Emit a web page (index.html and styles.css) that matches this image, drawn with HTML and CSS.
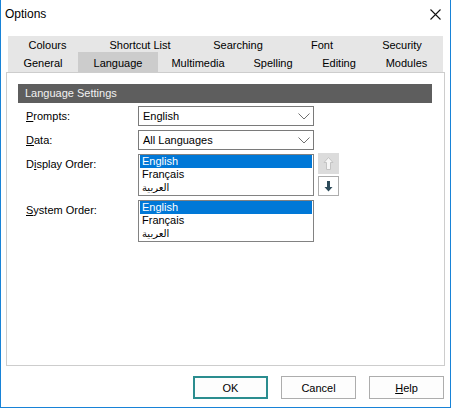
FILE: index.html
```html
<!DOCTYPE html>
<html>
<head>
<meta charset="utf-8">
<link rel="stylesheet" href="styles.css">
</head>
<body>
<div class="window">
  <div class="titlebar">
    <span class="title">Options</span>
    <svg class="close" width="11" height="11" viewBox="0 0 11 11"><path d="M0.5 0.5L10.5 10.5M10.5 0.5L0.5 10.5" stroke="#111" stroke-width="1.1" fill="none"/></svg>
  </div>
  <div class="tabs">
    <div class="tabrow row1">
      <div class="tab">Colours</div>
      <div class="tab">Shortcut List</div>
      <div class="tab">Searching</div>
      <div class="tab">Font</div>
      <div class="tab">Security</div>
    </div>
    <div class="tabrow row2">
      <div class="tab">General</div>
      <div class="tab selected">Language</div>
      <div class="tab">Multimedia</div>
      <div class="tab">Spelling</div>
      <div class="tab">Editing</div>
      <div class="tab">Modules</div>
    </div>
  </div>
  <div class="panel">
    <div class="section-header">Language Settings</div>
    <div class="form">
      <div class="label"><u>P</u>rompts:</div>
      <div class="combo"><span>English</span><svg class="chev" width="12" height="7" viewBox="0 0 12 7"><polyline points="0.5,0.5 6,6 11.5,0.5" fill="none" stroke="#707070" stroke-width="1"/></svg></div>
      <div></div>

      <div class="label"><u>D</u>ata:</div>
      <div class="combo"><span>All Languages</span><svg class="chev" width="12" height="7" viewBox="0 0 12 7"><polyline points="0.5,0.5 6,6 11.5,0.5" fill="none" stroke="#707070" stroke-width="1"/></svg></div>
      <div></div>

      <div class="label list-label">D<u>i</u>splay Order:</div>
      <div class="listbox">
        <div class="item sel">English</div>
        <div class="item">Français</div>
        <div class="item arabic"><bdi>العربية</bdi></div>
      </div>
      <div class="movers">
        <div class="mover up"><svg width="19" height="19" viewBox="0 0 19 19"><path d="M9.5 3.5L14 8.5H11.5V15.5H7.5V8.5H5Z" fill="#f6f6f6" stroke="#c4c4c4" stroke-width="1"/></svg></div>
        <div class="mover down"><svg width="19" height="18" viewBox="0 0 19 18"><path d="M8 4H11V10H13.5L9.5 14.5L5.5 10H8Z" fill="#2d4b5a"/></svg></div>
      </div>

      <div class="label list-label"><u>S</u>ystem Order:</div>
      <div class="listbox">
        <div class="item sel">English</div>
        <div class="item">Français</div>
        <div class="item arabic"><bdi>العربية</bdi></div>
      </div>
      <div></div>
    </div>
  </div>
  <div class="buttons">
    <div class="btn default">OK</div>
    <div class="btn">Cancel</div>
    <div class="btn"><u>H</u>elp</div>
  </div>
</div>
</body>
</html>
```
FILE: styles.css
```css
html, body {
  margin: 0;
  padding: 0;
  background: #ffffff;
}
.window {
  width: 451px;
  height: 408px;
  box-sizing: border-box;
  border: 1px solid #1883d7;
  border-top: none;
  background: #ffffff;
  display: flex;
  flex-direction: column;
  font-family: "Liberation Sans", Arial, sans-serif;
  font-size: 11px;
  color: #000;
}
.titlebar {
  height: 28px;
  display: flex;
  align-items: center;
  padding-left: 4px;
  flex-shrink: 0;
}
.title {
  font-size: 12px;
  line-height: 14px;
}
.close {
  margin-left: auto;
  margin-right: 9px;
}
.tabs {
  margin: 8px 7px 0 7px;
  height: 36px;
  background: #e6e6e6;
  display: flex;
  flex-direction: column;
  flex-shrink: 0;
}
.tabrow {
  display: grid;
}
.row1 {
  height: 16px;
  grid-template-columns: 79px 106px 90px 78px 82px;
}
.row2 {
  height: 20px;
  grid-template-columns: 70px 80px 80px 70px 62px 73px;
}
.tab {
  display: flex;
  align-items: center;
  justify-content: center;
  white-space: nowrap;
  padding-top: 1px;
}
.row2 .tab {
  padding-top: 2px;
}
.tab.selected {
  background: #cccccc;
}
.panel {
  margin: 0 5px;
  height: 294px;
  box-sizing: border-box;
  border: 1px solid #cdcdcd;
  padding: 11px 12px 0 11px;
  flex-shrink: 0;
}
.section-header {
  height: 19px;
  line-height: 19px;
  background: #5e5e5e;
  color: #f2f2f2;
  padding-left: 7px;
  font-size: 11px;
}
.form {
  margin-top: 3px;
  margin-left: 8px;
  display: grid;
  grid-template-columns: 112px 176px 21px;
  grid-template-rows: 20px 20px 42px 42px;
  row-gap: 4px;
}
.form > :nth-child(3n) {
  margin-left: 4px;
}
.label {
  display: flex;
  align-items: center;
  white-space: nowrap;
}
.list-label {
  align-items: flex-start;
  padding-top: 4px;
}
.combo {
  box-sizing: border-box;
  height: 20px;
  border: 1px solid #7a7a7a;
  display: flex;
  align-items: center;
  padding-left: 4px;
}
.chev {
  margin-left: auto;
  margin-right: 3px;
}
.listbox {
  box-sizing: border-box;
  height: 42px;
  border: 1px solid #828282;
  padding: 0 1px;
  overflow: hidden;
}
.item {
  height: 13px;
  line-height: 13px;
  padding-left: 2px;
  white-space: nowrap;
}
.item.sel {
  background: #0078d7;
  color: #ffffff;
}
.item.arabic {
  text-align: left;
  font-family: "DejaVu Sans", "Noto Sans", sans-serif;
  font-size: 10px;
}
.movers {
  display: flex;
  flex-direction: column;
  gap: 2px;
  margin-top: -1px;
}
.mover {
  box-sizing: border-box;
  width: 21px;
  display: flex;
  align-items: center;
  justify-content: center;
}
.mover.up {
  height: 21px;
  background: #dcdcdc;
}
.mover.down {
  height: 20px;
  border: 1px solid #adadad;
  background: #ffffff;
}
.buttons {
  margin-top: 10px;
  margin-right: 6px;
  display: flex;
  justify-content: flex-end;
  gap: 13px;
  flex-shrink: 0;
}
.btn {
  box-sizing: border-box;
  width: 75px;
  height: 23px;
  border: 1px solid #adadad;
  background: #fdfdfd;
  display: flex;
  align-items: center;
  justify-content: center;
}
.btn.default {
  border: 2px solid #2b8d8f;
}
```
